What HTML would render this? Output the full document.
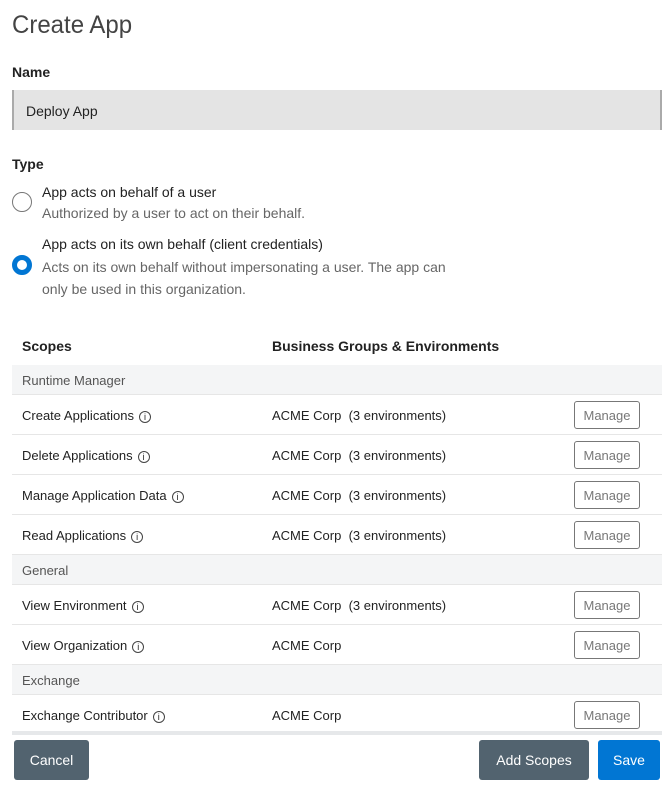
<!DOCTYPE html>
<html><head><style>
*{box-sizing:border-box;margin:0;padding:0}
body{width:672px;height:799px;background:#fff;font-family:"Liberation Sans",sans-serif;color:#222;position:relative;overflow:hidden}
.a{position:absolute}
h1{position:absolute;left:12px;top:11px;font-size:25px;font-weight:normal;color:#444;transform:scaleX(0.96);transform-origin:left}
.lbl{font-weight:bold;font-size:14px}
.inp{left:12px;top:90px;width:650px;height:40px;background:#e4e4e4;border-left:2px solid #aaa;border-right:2px solid #aaa;font-size:14px;padding:13px 0 0 12px}
.rad{width:20px;height:20px;border-radius:50%;border:1px solid #777;left:12px}
.rad.on{border:5px solid #0176d3}
.t{font-size:14px;color:#222}
.s{font-size:14px;color:#666}
.row{position:absolute;left:12px;width:650px;height:40px;border-bottom:1px solid #e6e6e6;font-size:13px}
.row .n{position:absolute;left:10px;top:13px}
.row .e{position:absolute;left:260px;top:13px}
.row .m{position:absolute;left:562px;top:6px;width:66px;height:28px;border:1px solid #777;border-radius:3px;color:#777;text-align:center;line-height:27px;font-size:13px}
.grp{position:absolute;left:12px;width:650px;height:30px;background:#f4f5f6;border-bottom:1px solid #e6e6e6;font-size:13px;color:#555;padding:8px 0 0 10px}
.i{display:inline-block;width:12px;height:12px;border:1px solid #444;border-radius:50%;font-size:9px;line-height:10px;text-align:center;margin-left:5px;vertical-align:0}
.btn{position:absolute;top:740px;height:40px;border-radius:3px;color:#fff;font-size:14px;text-align:center;line-height:40px;background:#52636f}
</style></head><body>
<h1>Create App</h1>
<div class="a lbl" style="left:12px;top:64px">Name</div>
<div class="a inp">Deploy App</div>
<div class="a lbl" style="left:12px;top:156px">Type</div>
<div class="a rad" style="top:192px"></div>
<div class="a t" style="left:42px;top:184px">App acts on behalf of a user</div>
<div class="a s" style="left:42px;top:205px">Authorized by a user to act on their behalf.</div>
<div class="a rad on" style="top:255px"></div>
<div class="a t" style="left:42px;top:236px">App acts on its own behalf (client credentials)</div>
<div class="a s" style="left:42px;top:256px;width:425px;line-height:22px">Acts on its own behalf without impersonating a user. The app can only be used in this organization.</div>
<div class="a lbl" style="left:22px;top:338px">Scopes</div>
<div class="a lbl" style="left:272px;top:338px">Business Groups &amp; Environments</div>
<div class="grp" style="top:365px">Runtime Manager</div>
<div class="row" style="top:395px"><span class="n">Create Applications<span class="i">i</span></span><span class="e">ACME Corp&nbsp;&nbsp;(3 environments)</span><span class="m">Manage</span></div>
<div class="row" style="top:435px"><span class="n">Delete Applications<span class="i">i</span></span><span class="e">ACME Corp&nbsp;&nbsp;(3 environments)</span><span class="m">Manage</span></div>
<div class="row" style="top:475px"><span class="n">Manage Application Data<span class="i">i</span></span><span class="e">ACME Corp&nbsp;&nbsp;(3 environments)</span><span class="m">Manage</span></div>
<div class="row" style="top:515px"><span class="n">Read Applications<span class="i">i</span></span><span class="e">ACME Corp&nbsp;&nbsp;(3 environments)</span><span class="m">Manage</span></div>
<div class="grp" style="top:555px">General</div>
<div class="row" style="top:585px"><span class="n">View Environment<span class="i">i</span></span><span class="e">ACME Corp&nbsp;&nbsp;(3 environments)</span><span class="m">Manage</span></div>
<div class="row" style="top:625px"><span class="n">View Organization<span class="i">i</span></span><span class="e">ACME Corp</span><span class="m">Manage</span></div>
<div class="grp" style="top:665px">Exchange</div>
<div class="row" style="top:695px;border-bottom:4px solid #e6e8ea"><span class="n">Exchange Contributor<span class="i">i</span></span><span class="e">ACME Corp</span><span class="m">Manage</span></div>
<div class="btn" style="left:14px;width:75px">Cancel</div>
<div class="btn" style="left:479px;width:110px">Add Scopes</div>
<div class="btn" style="left:598px;width:62px;background:#0176d3">Save</div>
</body></html>
